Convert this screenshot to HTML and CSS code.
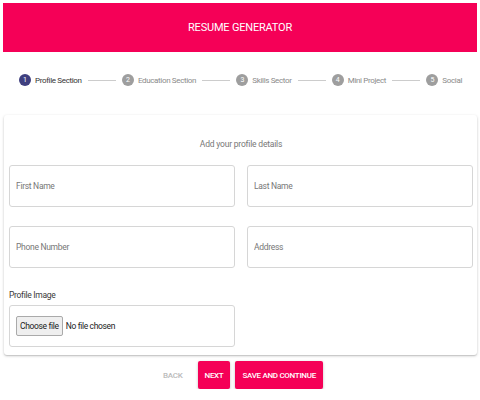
FILE: index.html
```html
<!DOCTYPE html>
<html>
<head>
    <meta charset="utf-8">
    <title>Resume Generator</title>
    <link rel="stylesheet" href="styles.css">
</head>
<body>
    <div class="app">
        <header class="app-bar">RESUME GENERATOR</header>

        <div class="stepper">
            <div class="step active"><span class="step-num">1</span><span class="step-label">Profile Section</span></div>
            <div class="step-line"></div>
            <div class="step"><span class="step-num">2</span><span class="step-label">Education Section</span></div>
            <div class="step-line"></div>
            <div class="step"><span class="step-num">3</span><span class="step-label">Skills Sector</span></div>
            <div class="step-line"></div>
            <div class="step"><span class="step-num">4</span><span class="step-label">Mini Project</span></div>
            <div class="step-line"></div>
            <div class="step"><span class="step-num">5</span><span class="step-label">Social</span></div>
        </div>

        <div class="card">
            <p class="card-title">Add your profile details</p>
            <div class="form-grid">
                <div class="field"><input type="text" placeholder="First Name"></div>
                <div class="field"><input type="text" placeholder="Last Name"></div>
                <div class="field"><input type="text" placeholder="Phone Number"></div>
                <div class="field"><input type="text" placeholder="Address"></div>
                <div class="file-group">
                    <label class="file-label">Profile Image</label>
                    <div class="file-box">
                        <span class="file-btn">Choose file</span>
                        <span class="file-name">No file chosen</span>
                    </div>
                </div>
            </div>
        </div>

        <div class="actions">
            <button class="btn-text" disabled>BACK</button>
            <button class="btn">NEXT</button>
            <button class="btn">SAVE AND CONTINUE</button>
        </div>
    </div>
</body>
</html>
```

FILE: styles.css
```css
body {
    margin: 0;
    font-family: Roboto, "Liberation Sans", sans-serif;
    background: #fff;
}
.app {
    padding: 3px 3px 0 3px;
}
.app-bar {
    height: 49px;
    background: #f50057;
    color: #fff;
    font-size: 11px;
    display: flex;
    align-items: center;
    justify-content: center;
    letter-spacing: -0.2px;
}
.stepper {
    display: flex;
    align-items: center;
    padding: 21px 15px 0 16px;
    height: 14px;
}
.step {
    display: flex;
    align-items: center;
}
.step-num {
    width: 12px;
    height: 12px;
    border-radius: 50%;
    background: #9e9e9e;
    color: #fff;
    font-size: 7px;
    display: flex;
    align-items: center;
    justify-content: center;
    margin-right: 4px;
}
.step.active .step-num {
    background: #3f3f7f;
}
.step-label {
    font-size: 8px;
    color: #8a8a8a;
    letter-spacing: -0.35px;
}
.step.active .step-label {
    color: #333;
}
.step-line {
    flex: 1;
    height: 1px;
    background: #ccc;
    margin: 0 6px;
}
.card {
    margin: 28px 0 0 1px;
    background: #fff;
    box-shadow: 0 1px 3px rgba(0,0,0,0.2), 0 1px 1px rgba(0,0,0,0.1);
    border-radius: 3px;
    padding: 24px 4px 8px 5px;
}
.card-title {
    margin: 0 0 16px 0;
    text-align: center;
    font-size: 8.5px;
    color: #777;
    letter-spacing: -0.2px;
}
.form-grid {
    display: grid;
    grid-template-columns: 1fr 1fr;
    column-gap: 12px;
    row-gap: 19px;
}
.field input {
    box-sizing: border-box;
    width: 100%;
    height: 42px;
    border: 1px solid #d6d6d6;
    border-radius: 3px;
    padding: 0 6px;
    font-family: inherit;
    font-size: 8.5px;
    letter-spacing: -0.3px;
    color: #333;
    outline: none;
}
.field input::placeholder {
    color: #777;
}
.file-group {
    margin-top: 3px;
}
.file-label {
    display: block;
    font-size: 8.5px;
    color: #3a3a3a;
    margin-bottom: 5px;
    letter-spacing: -0.3px;
}
.file-box {
    box-sizing: border-box;
    height: 42px;
    border: 1px solid #d6d6d6;
    border-radius: 3px;
    padding: 0 6px;
    display: flex;
    align-items: center;
}
.file-btn {
    font-size: 8.5px;
    color: #222;
    background: #efefef;
    border: 1px solid #aaa;
    border-radius: 2px;
    padding: 4px 3px;
    margin-right: 3px;
    letter-spacing: -0.35px;
}
.file-name {
    font-size: 8.5px;
    color: #222;
    letter-spacing: -0.35px;
}
.actions {
    display: flex;
    justify-content: center;
    align-items: center;
    gap: 5px;
    margin-top: 6px;
}
.actions button {
    font-family: inherit;
    font-size: 8px;
    font-weight: 500;
    height: 28px;
    border: none;
    border-radius: 2px;
    letter-spacing: -0.3px;
}
.btn-text {
    background: none;
    color: #bbb;
    padding: 0 10px 0 6px;
}
.btn {
    background: #f50057;
    color: #fff;
    padding: 0 7px;
    box-shadow: 0 1px 3px rgba(0,0,0,0.25);
    cursor: pointer;
}
```
